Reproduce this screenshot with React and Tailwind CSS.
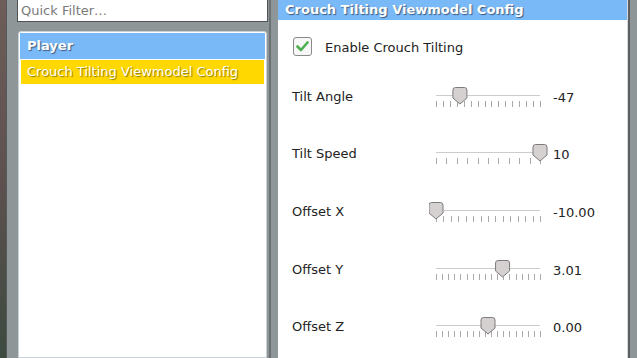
import React from 'react';

const sliders = [
  { label: 'Tilt Angle', value: '-47', pos: 0.23, ticks: 16 },
  { label: 'Tilt Speed', value: '10', pos: 1, ticks: 11 },
  { label: 'Offset X', value: '-10.00', pos: 0, ticks: 15 },
  { label: 'Offset Y', value: '3.01', pos: 0.64, ticks: 18 },
  { label: 'Offset Z', value: '0.00', pos: 0.5, ticks: 18 },
];

function Slider({ pos, ticks }) {
  const width = 119;
  const pad = 7;
  const range = 104;
  const tx = pad + pos * range;
  const step = range / (ticks - 1);
  return (
    <svg width={width} height={22} className="block">
      <line x1={pad} y1={8.5} x2={pad + range} y2={8.5} stroke="#cfcbcb" strokeWidth="1" />
      {Array.from({ length: ticks }).map((_, i) => (
        <line
          key={i}
          x1={Math.round(pad + i * step) + 0.5}
          y1={14}
          x2={Math.round(pad + i * step) + 0.5}
          y2={20}
          stroke="#a9a9a9"
          strokeWidth="1"
        />
      ))}
      <path
        d={`M${tx - 7} 3 Q${tx - 7} 0.5 ${tx - 4.5} 0.5 L${tx + 4.5} 0.5 Q${tx + 7} 0.5 ${tx + 7} 3 L${tx + 7} 11 L${tx} 17 L${tx - 7} 11 Z`}
        fill="#d5d1d1"
        stroke="#7d7b7b"
        strokeWidth="1"
      />
    </svg>
  );
}

export default function App() {
  return (
    <div
      className="flex w-[637px] h-[358px] overflow-hidden bg-[#8f9698] text-[13px]"
      style={{ fontFamily: '"DejaVu Sans", Verdana, sans-serif' }}
    >
      {/* game scene strip */}
      <div className="w-[6px] shrink-0 bg-gradient-to-b from-[#6e5d5a] via-[#5d5150] to-[#3c4a40]" />
      <div className="w-[1px] shrink-0 bg-[#56595b]" />

      {/* Left column */}
      <div className="w-[251px] shrink-0 ml-[10px] flex flex-col">
        <div className="h-[22px] bg-white border border-[#4f5254] border-t-0 flex items-center pl-[3px] text-[#7a7a7a]">
          Quick Filter…
        </div>
        <div className="mt-[9px] flex-1 mx-[1px] bg-white border border-[#c9d0d8] rounded-t-[3px] p-[1px] flex flex-col">
          <div className="h-[26px] bg-[#7ab9f8] flex items-center pl-[7px] font-bold text-white [text-shadow:1px_1px_1px_#3b5a80]">
            Player
          </div>
          <div className="h-[24px] bg-[#ffd800] mx-[1px] mt-[1px] flex items-center pl-[6px] text-white [text-shadow:1px_1px_1px_#8a7600]">
            Crouch Tilting Viewmodel Config
          </div>
        </div>
      </div>

      {/* middle gutter */}
      <div className="w-[10px] shrink-0 flex">
        <div className="w-[2px] ml-[1px] bg-[#6c7173]" />
      </div>

      {/* Right panel */}
      <div className="w-[349px] shrink-0 bg-white flex flex-col">
        <div className="h-[23px] bg-[#7ab9f8] flex items-center pl-[7px] font-bold text-white [text-shadow:1px_1px_1px_#3b5a80]">
          Crouch Tilting Viewmodel Config
        </div>
        <div className="flex items-center mt-[17px] pl-[15px] h-[20px]">
          <div className="w-[19px] h-[19px] rounded-[3px] border border-[#8a8a8a] bg-[#f7f7f7] flex items-center justify-center">
            <svg width="13" height="11" viewBox="0 0 13 11">
              <path d="M1.5 5.5 L5 9 L11.5 1.5" fill="none" stroke="#4caf50" strokeWidth="2.6" strokeLinecap="round" strokeLinejoin="round" />
            </svg>
          </div>
          <span className="ml-[13px] text-[#222] mt-[2px]">Enable Crouch Tilting</span>
        </div>
        <div className="flex flex-col mt-[32px]">
          {sliders.map((s) => (
            <div key={s.label} className="h-[57.7px] flex items-start">
              <span className="w-[151px] pl-[14px] text-[#222] leading-[16px]">{s.label}</span>
              <div className="mt-[-2px]">
                <Slider pos={s.pos} ticks={s.ticks} />
              </div>
              <span className="ml-[5px] text-[#222] leading-[16px] mt-[1px]">{s.value}</span>
            </div>
          ))}
        </div>
      </div>

      {/* right gutter */}
      <div className="w-[1px] shrink-0 bg-[#d8d8dc]" />
      <div className="w-[2px] shrink-0 bg-[#5c6063]" />
      <div className="flex-1 bg-[#8f9698]" />
    </div>
  );
}
